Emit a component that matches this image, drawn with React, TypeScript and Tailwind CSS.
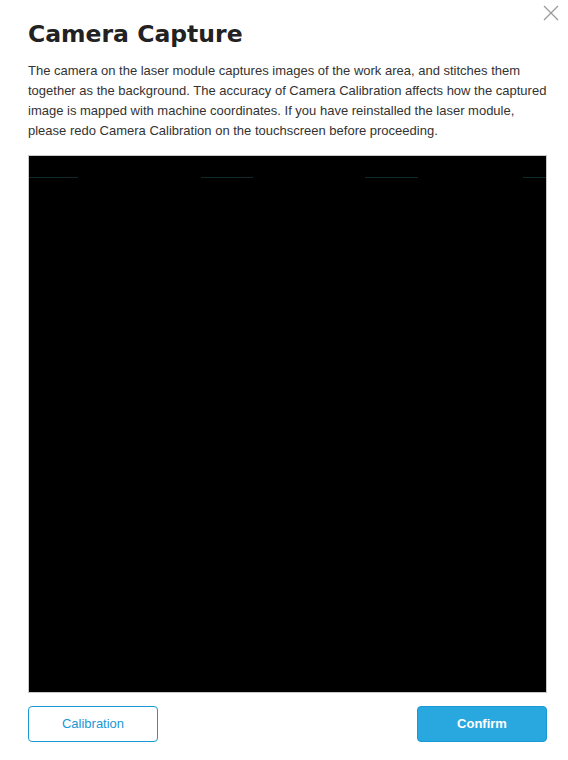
export default function App() {
  return (
    <div className="relative w-[568px] h-[760px] bg-white" style={{ fontFamily: '"Liberation Sans", Arial, sans-serif' }}>
      <button className="absolute right-[9px] top-[5px] w-[16px] h-[16px] text-[#9a9a9a]" aria-label="Close">
        <svg viewBox="0 0 16 16" width="16" height="16" fill="none" stroke="currentColor" strokeWidth="1.3">
          <path d="M1 1L15 15M15 1L1 15" />
        </svg>
      </button>
      <div className="pl-[28px] pr-[21px] pt-[18px]">
        <h1
          className="text-[23.5px] leading-[32px] font-bold text-[#222]"
          style={{ fontFamily: '"DejaVu Sans", "Liberation Sans", sans-serif' }}
        >
          Camera Capture
        </h1>
        <p className="mt-[11px] text-[13px] leading-[20px] text-[#333]">
          The camera on the laser module captures images of the work area, and stitches them together as the background. The
          accuracy of Camera Calibration affects how the captured image is mapped with machine coordinates. If you have
          reinstalled the laser module, please redo Camera Calibration on the touchscreen before proceeding.
        </p>
        <div className="mt-[14px] h-[538px] bg-black border border-[#c8c8c8] flex flex-col">
          <div className="mt-[21px] h-px flex">
            <div className="w-[49px] bg-[#0f2a26]" />
            <div className="w-[123px]" />
            <div className="w-[52px] bg-[#0f2a26]" />
            <div className="w-[112px]" />
            <div className="w-[53px] bg-[#0f2a26]" />
            <div className="w-[105px]" />
            <div className="flex-1 bg-[#0f2a26]" />
          </div>
        </div>
        <div className="mt-[13px] flex justify-between">
          <button className="w-[130px] h-[36px] rounded-[4px] border border-[#1a97d5] text-[#1a97d5] text-[13px] bg-white">
            Calibration
          </button>
          <button className="w-[130px] h-[36px] rounded-[4px] border border-[#1a97d5] bg-[#29a8e0] text-white text-[13px] font-bold">
            Confirm
          </button>
        </div>
      </div>
    </div>
  );
}
